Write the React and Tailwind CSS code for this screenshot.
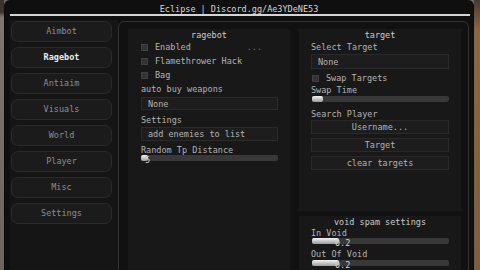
import React from "react";

const Check = () => (
  <div className="w-[7px] h-[7px] bg-[#333333] border border-[#404040] shrink-0" />
);

const Slider = ({ fill, value, valueLeft }) => (
  <div className="relative h-[6px] w-full rounded-[2px] bg-[#383838]">
    <div
      className="h-full rounded-[2px] bg-[linear-gradient(to_bottom,#f4f4f4,#9a9a9a)]"
      style={{ width: fill }}
    />
    {value && (
      <span
        className="absolute top-[1px] leading-[9px] text-[#d0d0d0]"
        style={{ left: valueLeft }}
      >
        {value}
      </span>
    )}
  </div>
);

const SideBtn = ({ label, active }) => (
  <div
    className={
      "h-[21px] w-[101px] rounded-[7px] border border-[#2a2a2a] bg-[#1b1b1b] flex items-center justify-center " +
      (active ? "text-[#ededed] font-bold" : "text-[#8e8e8e]")
    }
  >
    {label}
  </div>
);

export default function App() {
  const tabs = ["Aimbot", "Ragebot", "Antiaim", "Visuals", "World", "Player", "Misc", "Settings"];
  return (
    <div className="w-[480px] h-[270px] overflow-hidden flex bg-[#6f6a63] font-['DejaVu_Sans_Mono',monospace] text-[8.5px] leading-none">
      <div className="w-[4px] h-full bg-[linear-gradient(to_bottom,#3a342d_0px,#3a342d_12px,#7c776f_17px,#6a665f_100%)]" />
      <div className="w-[470px] h-[290px] shrink-0 bg-[#0f0f0f] border-x border-[#0a0a0a] rounded-t-[6px] flex flex-col">
        <div className="h-[14px] pt-[4px] flex items-center justify-center text-[#d6d6d6]">
          Eclipse | Discord.gg/Ae3YDeNE53
        </div>
        <div className="h-[2px] ml-[5px] mr-[3px] bg-[#d4d4d4]" />
        <div className="flex flex-1 mt-[4px] pl-[5px]">
          <div className="w-[108px] bg-[#151515] pt-[1px] pl-[1px] flex flex-col gap-[5px]">
            {tabs.map((t) => (
              <SideBtn key={t} label={t} active={t === "Ragebot"} />
            ))}
          </div>
          <div className="w-[351px] mt-[1px] border border-[#323232] rounded-t-[6px] bg-[#111111] pt-[7px] pl-[9px] flex gap-[9px]">
            {/* ragebot */}
            <div className="w-[162px] bg-[#181818] pt-[2px] pl-[13px] pr-[12px] flex flex-col text-[#b4b4b4]">
              <div className="h-[9px] flex items-center justify-center text-[#cccccc] -ml-[1px]">ragebot</div>
              <div className="h-[14px] flex items-center">
                <Check />
                <span className="ml-[7px]">Enabled</span>
                <span className="ml-auto mr-[16px] text-[#707070]">...</span>
              </div>
              <div className="h-[14px] flex items-center">
                <Check />
                <span className="ml-[7px]">Flamethrower Hack</span>
              </div>
              <div className="h-[14px] flex items-center">
                <Check />
                <span className="ml-[7px]">Bag</span>
              </div>
              <div className="h-[14px] flex items-center">auto buy weapons</div>
              <div className="mt-[1px] h-[13px] border border-[#2a2a2a] bg-[#1d1d1d] flex items-center pl-[6px] pt-[1px]">None</div>
              <div className="mt-[3px] h-[14px] flex items-center pt-[1px]">Settings</div>
              <div className="h-[14px] border border-[#2a2a2a] bg-[#1d1d1d] flex items-center pl-[6px] pt-[1px]">add enemies to list</div>
              <div className="mt-[3px] h-[11px] flex items-center pt-[1px]">Random Tp Distance</div>
              <Slider fill="7px" value="5" valueLeft="4px" />
            </div>
            {/* right column */}
            <div className="w-[162px] flex flex-col gap-[5px]">
              <div className="h-[182px] bg-[#181818] pt-[2px] px-[12px] flex flex-col text-[#b4b4b4]">
                <div className="h-[9px] flex items-center justify-center text-[#cccccc]">target</div>
                <div className="h-[15px] flex items-center">Select Target</div>
                <div className="-mt-[1px] h-[15px] border border-[#2a2a2a] bg-[#1d1d1d] flex items-center pl-[6px] pt-[1px]">None</div>
                <div className="h-[17px] flex items-center pl-[1px] pt-[1px]">
                  <Check />
                  <span className="ml-[7px]">Swap Targets</span>
                </div>
                <div className="h-[8px] flex items-center">Swap Time</div>
                <div className="mt-[2px] pl-[1px]">
                  <Slider fill="11px" />
                </div>
                <div className="mt-[5px] h-[13px] flex items-center pt-[1px]">Search Player</div>
                <div className="h-[14px] border border-[#2a2a2a] bg-[#1d1d1d] flex items-center justify-center pt-[1px]">Username...</div>
                <div className="mt-[4px] h-[14px] border border-[#2a2a2a] bg-[#1d1d1d] flex items-center justify-center pt-[1px]">Target</div>
                <div className="mt-[4px] h-[14px] border border-[#2a2a2a] bg-[#1d1d1d] flex items-center justify-center pt-[1px]">clear targets</div>
              </div>
              <div className="flex-1 bg-[#181818] px-[12px] flex flex-col text-[#b4b4b4]">
                <div className="h-[12px] flex items-center justify-center text-[#cccccc]">void spam settings</div>
                <div className="h-[10px] flex items-center">In Void</div>
                <div className="pl-[1px]">
                  <Slider fill="27px" value="0.2" valueLeft="23px" />
                </div>
                <div className="mt-[4px] h-[12px] flex items-center">Out Of Void</div>
                <div className="pl-[1px]">
                  <Slider fill="27px" value="0.2" valueLeft="23px" />
                </div>
              </div>
            </div>
          </div>
        </div>
      </div>
      <div className="flex-1 h-full bg-[linear-gradient(to_bottom,#4a3a2a_0px,#8a6747_30px,#7d5d40_100%)]" />
    </div>
  );
}
